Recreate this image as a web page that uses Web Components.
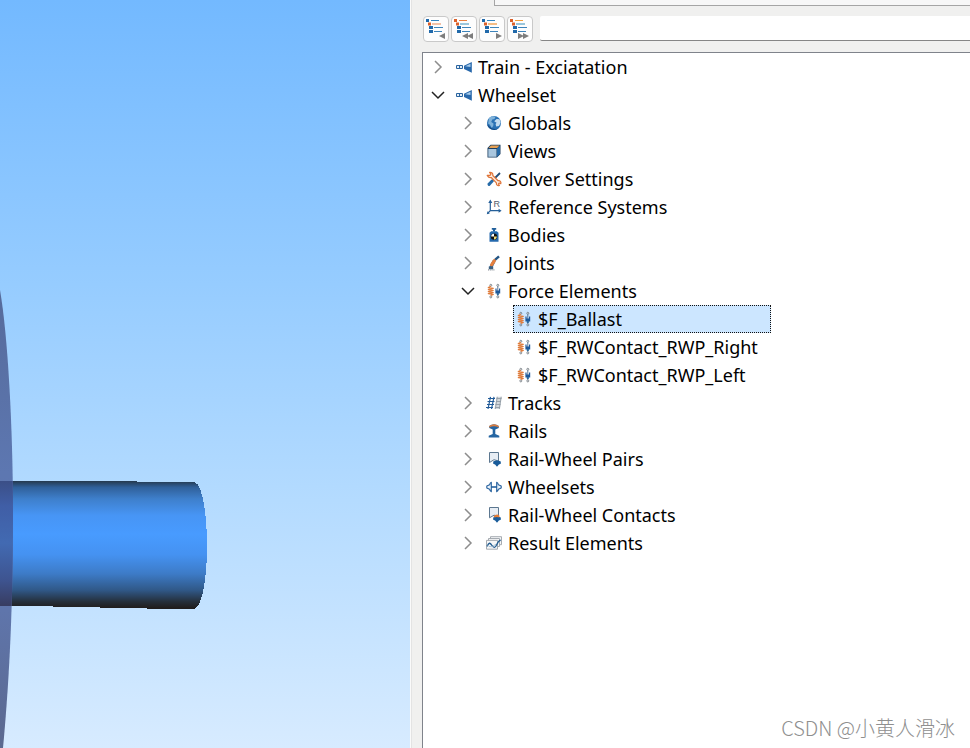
<!DOCTYPE html>
<html lang="en">
<head>
<meta charset="utf-8">
<title>Model Tree</title>
<style>
  html, body { height: 100%; margin: 0; }
  body { font-family: "Noto Sans", "Noto Sans CJK SC", sans-serif; font-size: 18px; color: #000; background: #f0f0ef; overflow: hidden; }
</style>
</head>
<body>
<model-workspace>
  <model-viewport slot="view"></model-viewport>
  <tree-toolbar slot="bar">
    <tool-button label="Collapse" variant="collapse"></tool-button>
    <tool-button label="Collapse all" variant="collapse-all"></tool-button>
    <tool-button label="Expand" variant="expand"></tool-button>
    <tool-button label="Expand all" variant="expand-all"></tool-button>
  </tree-toolbar>
  <tree-view slot="tree">
    <tree-node label="Train - Exciatation" icon="model" state="closed"></tree-node>
    <tree-node label="Wheelset" icon="model" state="open">
      <tree-node label="Globals" icon="globe" state="closed"></tree-node>
      <tree-node label="Views" icon="cube" state="closed"></tree-node>
      <tree-node label="Solver Settings" icon="tools" state="closed"></tree-node>
      <tree-node label="Reference Systems" icon="axes" state="closed"></tree-node>
      <tree-node label="Bodies" icon="body" state="closed"></tree-node>
      <tree-node label="Joints" icon="joint" state="closed"></tree-node>
      <tree-node label="Force Elements" icon="force" state="open">
        <tree-node label="$F_Ballast" icon="force" selected></tree-node>
        <tree-node label="$F_RWContact_RWP_Right" icon="force"></tree-node>
        <tree-node label="$F_RWContact_RWP_Left" icon="force"></tree-node>
      </tree-node>
      <tree-node label="Tracks" icon="track" state="closed"></tree-node>
      <tree-node label="Rails" icon="rail" state="closed"></tree-node>
      <tree-node label="Rail-Wheel Pairs" icon="pair" state="closed"></tree-node>
      <tree-node label="Wheelsets" icon="wheelset" state="closed"></tree-node>
      <tree-node label="Rail-Wheel Contacts" icon="contact" state="closed"></tree-node>
      <tree-node label="Result Elements" icon="result" state="closed"></tree-node>
    </tree-node>
  </tree-view>
  <water-mark slot="mark">CSDN @小黄人滑冰</water-mark>
</model-workspace>

<script>
const ICONS = {
  model: '<path d="M.5 6.5h6v3h-6z" fill="#e4eef8" stroke="#2b649f"/><path d="M3.5 6.5v3" stroke="#2b649f"/><path d="M8 6.7L15.8 3v10.8L8 9.9z" fill="#2868ab"/><path d="M9.2 7.2l5.3-2.5v3.3z" fill="#a9cdec"/>',
  globe: '<circle cx="8" cy="8" r="7" fill="#2a72b5"/><path d="M3 3.2C5 1 8 .9 9.4 2L8.5 4 6.3 4.4 5.2 6.9 7.5 8.4 7.2 11 5.8 13 3.9 9.7 2.1 8.4z" fill="#7fb2da"/><path d="M8.2 6.2l2.4-2.1 3 .1 1 3.6-1.6 3.2-2.8.4-.6-2.5 1-1.2z" fill="#c3dcf0"/><path d="M1.2 9A7 7 0 0 0 13 13a8 8 0 0 1-9-1z" fill="#124b86"/>',
  cube: '<path d="M1.5 5L4.6 1.7h9.9v9.4L11 14.5H1.5z" fill="#1c3f60"/><path d="M2.6 5L5 2.5h8.5L11.2 5z" fill="#e6a053"/><path d="M2.3 6h8.2v7.8H2.3z" fill="#a9c6de"/><path d="M11 5.6l3-2.9v8.1l-3 3z" fill="#276aa7"/>',
  tools: '<path d="M14 2L9 7" stroke="#224e78" stroke-width="1.8"/><path d="M6.4 9.8L3 13.4" stroke="#276ba8" stroke-width="3" stroke-linecap="round"/><path d="M1.2 4.4c1.2 2 2.8 2.5 4 2.1l5.2 5.3c-.3 2 1.2 3.3 3 2.6l-1-1.4.9-1 1.5.7c.6-2-.8-3.3-2.7-3L6.8 4.5C7.2 2.4 5.5 1 3.6 1.3l1.3 1.8-.9 1.2z" fill="#fdeee2" stroke="#df7438" stroke-width="1.2" stroke-linejoin="round"/>',
  axes: '<path d="M4.3 3v8.7H14M4.3 11.7L2 14" fill="none" stroke="#255f99" stroke-width="1.2"/><path d="M4.3.6L6.3 4h-4zM15.6 11.7l-3-2v4zM.8 15.2l.7-3 2.3 2.2z" fill="#255f99"/><text x="7.5" y="7.5" font-family="Liberation Sans" font-size="9" fill="#53606c">R</text>',
  body: '<path d="M5.8 1h4.4v1.8H9V4.4H7V2.8H5.8z" fill="#215f9b"/><path d="M5.2 4.2h5.6l1.7 1.6v9h-9v-9z" fill="#2469ad"/><circle cx="8" cy="9.6" r="3.2" fill="#111"/><path d="M8 9.6V6.8a2.8 2.8 0 0 0-2.8 2.8z" fill="#fff"/><path d="M8 9.6v2.8a2.8 2.8 0 0 0 2.8-2.8z" fill="#f0dc7a"/>',
  joint: '<path d="M8.4 5.4L13 1.4" stroke="#235584" stroke-width="2.4"/><path d="M4.2 13.5l4-7.7" stroke="#245f9d" stroke-width="3"/><path d="M5.6 9.8l2.7-4" stroke="#e6803e" stroke-width="3.2" stroke-linecap="round"/><path d="M2.8 14.2v-2.6h4.4v2.6z" fill="#3a5f80"/><path d="M2 14.8h7" stroke="#8b9199" stroke-width="1.2" stroke-dasharray="1.2 1"/>',
  force: '<g fill="none" stroke="#777f86" stroke-width=".9"><circle cx="4.8" cy="2.3" r="1"/><circle cx="4.8" cy="13.9" r="1"/><circle cx="11.8" cy="2.3" r="1"/><circle cx="11.8" cy="13.9" r="1"/><path d="M11.8 3.3v9.5" stroke="#466a8c"/></g><path d="M4.8 3.3L2.3 4.6l5 .8-5 1.2 5 .9-5 1.1 5 .9-5 1.1 5 .8-2.5 1.1" fill="none" stroke="#e07d3d" stroke-width="1.2" stroke-linejoin="round"/><path d="M9.4 5.5v5h4.8v-5H13v2h-2.4v-2z" fill="#1d589a"/><path d="M10.8 10h2v2h-2z" fill="#28699f"/>',
  track: '<g stroke="#235c99" fill="none"><path d="M4.5 1.8L2 14M8 1.8L5.5 14" stroke-width="1.2"/><path d="M2 3.5h7M1.5 6.5h7M1 9.5h7M0 12.5h7"/></g><path d="M10.6 1.8h5.2L14 14H8.4z" fill="#d5dade"/><g stroke="#939da6" fill="none" stroke-width=".9"><path d="M11.3 1.8L9.3 14M15.2 1.8L13.3 14"/><path d="M10.5 3.5h5M10 6.5h5M9.5 9.5h5M9 12.5h5"/></g>',
  rail: '<path d="M3.2 3Q8-.6 12.8 3v2L9.3 6.5V11l4 1.8v1.8H2.7v-1.8l4-1.8V6.5L3.2 5z" fill="#2465a2"/><path d="M3.2 4.5V3Q8-.6 12.8 3v1.5Q8 2 3.2 4.5z" fill="#de7d3d"/>',
  pair: '<path d="M3.5 1.5h9V10L8 8.7l-4.5 2.8z" fill="#e7edf4" stroke="#5c7790"/><path d="M7.2 10.4Q11 8.4 14.8 10.4v2.3l-1.9.7-1.9 2.3-1.9-2.3-1.9-.7z" fill="#195c9a"/>',
  wheelset: '<g fill="#eaf2fa" stroke="#245f9d" stroke-width="1.1" stroke-linejoin="round"><path d="M5.3 3.2v9.6Q4 12.6 3.6 10.2L.8 9V7l2.8-1.2Q4 3.4 5.3 3.2z"/><path d="M10.7 3.2v9.6q1.3-.2 1.7-2.6L15.2 9V7l-2.8-1.2Q12 3.4 10.7 3.2z"/></g><path d="M5 8h6" stroke="#245f9d" stroke-width="1.6"/>',
  contact: '<path d="M3.5.5h9V9L8 8.2l-4.5 2.6z" fill="#e7edf4" stroke="#5c7790"/><path d="M7.2 10.6Q11 8.6 14.8 10.6v2.1l-1.9.7-1.9 2.3-1.9-2.3-1.9-.7z" fill="#195c9a"/><path d="M7.6 9.2Q10.6 6.2 13.4 8.4v2.2q-2.4-1.2-5-.2z" fill="#e37c36"/>',
  result: '<g fill="#f6f7f8" stroke="#9da3a9" stroke-width=".9"><path d="M4.5 1.7h11v8h-11z"/><path d="M2.5 3.5h11v8h-11z"/><path d="M.5 5.4h11v8.8H.5z"/></g><path d="M1 11.4c2-4 3-4 4.7-1.2 2 3 3.4 3 5-.5 1-2.3 2-4 4-4.5" fill="none" stroke="#235d91" stroke-width="1.3"/><path d="M1 9.5l2 2 3 .2 4-2.5" fill="none" stroke="#9bb6cc" stroke-width=".8"/>'
};

function build(host, html) {
  const template = document.createElement('template');
  template.innerHTML = html;
  host.attachShadow({ mode: 'open' }).append(template.content.cloneNode(true));
}

customElements.define('model-workspace', class extends HTMLElement {
  constructor() {
    super();
    build(this, `<style>
      :host { display: grid; grid-template-columns: minmax(0, 41fr) minmax(0, 56fr); height: 100vh; position: relative; overflow: hidden; }
      aside { display: flex; flex-direction: column; min-width: 0; padding-left: 12px; background: linear-gradient(90deg, #fafafa 1px, #e3e3e3 1px 2px, #f0f0ef 2px); }
      .edge { height: 5px; margin-left: 72px; border: 1px solid #a5a5a5; border-width: 0 0 1px 1px; background: #f7f7f7; }
      ::slotted(tree-view) { flex: 1; min-height: 0; }
    </style><slot name="view"></slot><aside><div class="edge"></div><slot name="bar"></slot><slot name="tree"></slot></aside><slot name="mark"></slot>`);
  }
});

customElements.define('model-viewport', class extends HTMLElement {
  constructor() {
    super();
    build(this, `<style>
      :host { display: block; min-width: 0; overflow: hidden; background: linear-gradient(#73b9ff, #96ccff 38%, #b2daff 65%, #d7ebff); }
      svg { display: block; width: 100%; height: 100%; }
    </style>
    <svg viewBox="0 0 410 748" preserveAspectRatio="xMinYMid slice" role="img" aria-label="Wheelset 3D view">
      <defs>
        <linearGradient id="axle" gradientUnits="userSpaceOnUse" x1="0" y1="481" x2="0" y2="608">
          <stop offset="0" stop-color="#25394e"/><stop offset=".05" stop-color="#30609a"/><stop offset=".14" stop-color="#3e7fcb"/><stop offset=".27" stop-color="#4795f5"/><stop offset=".42" stop-color="#489bff"/><stop offset=".58" stop-color="#4592f1"/><stop offset=".73" stop-color="#3d7bc7"/><stop offset=".86" stop-color="#305887"/><stop offset=".95" stop-color="#252f3b"/><stop offset="1" stop-color="#201d1d"/>
        </linearGradient>
        <linearGradient id="disc" gradientUnits="userSpaceOnUse" x1="0" y1="290" x2="0" y2="748">
          <stop offset="0" stop-color="#566b9b"/><stop offset=".4" stop-color="#5d77b1"/><stop offset=".7" stop-color="#5f75ab"/><stop offset="1" stop-color="#5b698f"/>
        </linearGradient>
        <linearGradient id="overlap" gradientUnits="userSpaceOnUse" x1="0" y1="481" x2="0" y2="605">
          <stop offset="0" stop-color="#3b4f87"/><stop offset=".2" stop-color="#405ea6"/><stop offset=".5" stop-color="#426ab2"/><stop offset=".8" stop-color="#3e5490"/><stop offset="1" stop-color="#383d62"/>
        </linearGradient>
        <clipPath id="rim"><path d="M0 290C8 336 13 430 13 515 13 620 8 694 3 748H0z"/></clipPath>
      </defs>
      <path d="M0 481h137v1h57c8 1 13 30 13 64s-5 61-13 63h-47v-1h-47v-1H53v-1H0z" fill="url(#axle)" shape-rendering="crispEdges"/>
      <g clip-path="url(#rim)"><path d="M0 280h14v468H0z" fill="url(#disc)"/><path d="M0 481h14v125H0z" fill="url(#overlap)"/></g>
    </svg>`);
  }
});

customElements.define('tree-toolbar', class extends HTMLElement {
  constructor() {
    super();
    build(this, `<style>
      :host { display: flex; gap: 2px; padding: 10px 0 10px 1px; }
      input { flex: 1; min-width: 0; margin: 0 0 0 5px; padding: 0 6px; height: 25px; box-sizing: border-box; border: 0; border-bottom: 1px solid #868686; border-radius: 2px 0 0 2px; background: #fff; font: inherit; outline: 0; }
    </style><slot></slot><input type="text" aria-label="Filter">`);
  }
});

customElements.define('tool-button', class extends HTMLElement {
  connectedCallback() {
    if (this.shadowRoot) return;
    const variant = this.getAttribute('variant');
    const all = variant.endsWith('-all');
    const expand = variant.startsWith('expand');
    const first = all ? '#dc6029' : '#2069aa';
    const firstLine = all ? (expand ? '#f1a03d' : '#e88142') : '#3385c1';
    const secondLine = all ? '#78b3cf' : (expand ? '#f1a65d' : '#efad87');
    const left = x => `<path d="M${x} 17v6l-6-3z"/>`;
    const right = x => `<path d="M${x} 17v6l6-3z"/>`;
    const arrows = expand ? (all ? right(11) + right(16) : right(17)) : (all ? left(17) + left(22) : left(22));
    build(this, `<style>
      :host { display: block; width: 26px; height: 26px; }
      button { display: block; width: 100%; height: 100%; margin: 0; padding: 0; border: 1px solid #c9c9c9; border-radius: 4px; background: #fdfdfd; }
      svg { display: block; width: 24px; height: 24px; }
    </style><button type="button" aria-label="${this.getAttribute('label')}"><svg viewBox="1 1 24 24">
      <path d="M3 3h3v3H3z" fill="${first}"/><path d="M8 4.5h8" stroke="${firstLine}"/>
      <path d="M5 6.5h3v3H5z" fill="#dc6029"/><path d="M9 8h9" stroke="${secondLine}" stroke-width="1.5"/>
      <path d="M6 10h4v3H6zM6 14h4v3H6z" fill="#2069aa"/><path d="M11 11.5h9M11 15.5h8" stroke="#3d84bb"/>
      <g fill="#7d7d7d">${arrows}</g></svg></button>`);
  }
});

customElements.define('tree-view', class extends HTMLElement {
  constructor() {
    super();
    build(this, `<style>
      :host { display: block; overflow: hidden; background: #fff; border: 1px solid #7f838b; border-width: 1px 0 0 1px; }
    </style><div role="tree" aria-label="Model"><slot></slot></div>`);
  }
});

customElements.define('tree-icon', class extends HTMLElement {
  connectedCallback() {
    if (this.shadowRoot) return;
    build(this, `<style>
      :host { display: block; flex: none; width: 16px; height: 16px; }
      svg { display: block; width: 100%; height: 100%; overflow: visible; }
    </style><svg viewBox="0 0 16 16" aria-hidden="true">${ICONS[this.getAttribute('name')]}</svg>`);
  }
});

customElements.define('tree-node', class extends HTMLElement {
  connectedCallback() {
    if (this.shadowRoot) return;
    const state = this.getAttribute('state');
    const label = this.getAttribute('label');
    const chevron = state === 'open' ? '<path d="M2 5l6 6 6-6" stroke="#222"/>' : '<path d="M5 2l6 6-6 6" stroke="#8d8d8d"/>';
    const toggle = state ? `<button type="button" aria-label="Toggle ${label}" aria-expanded="${state === 'open'}"><svg viewBox="0 0 16 16">${chevron}</svg></button>` : '<span class="blank"></span>';
    build(this, `<style>
      :host { display: block; width: max-content; min-width: 100%; }
      .row { display: grid; grid-template-columns: 30px 1fr; height: 28px; }
      button { display: grid; place-items: center; margin: 0; padding: 0; border: 0; background: none; }
      button svg { width: 16px; height: 16px; fill: none; stroke-width: 1.5; }
      .item { display: flex; align-items: center; gap: 6px; box-sizing: border-box; height: 28px; padding: 0 12px 0 2px; border: 1px solid transparent; line-height: 26px; white-space: nowrap; }
      :host([selected]) .item { background: #cce6ff; border: 1px dotted #111; }
      .children { width: max-content; padding-left: 30px; }
    </style><div class="row" role="treeitem" aria-selected="${this.hasAttribute('selected')}">${toggle}<div class="item"><tree-icon name="${this.getAttribute('icon')}"></tree-icon><span>${label}</span></div></div>
    <div class="children" role="group"><slot></slot></div>`);
  }
});

customElements.define('water-mark', class extends HTMLElement {
  constructor() {
    super();
    build(this, `<style>
      :host { position: absolute; right: 15px; bottom: 6px; font: 300 20px/28px "Noto Sans CJK SC", sans-serif; color: #8f8f8f; text-shadow: 1px 1px 0 #fff; white-space: nowrap; pointer-events: none; }
    </style><slot></slot>`);
  }
});
</script>
</body>
</html>
